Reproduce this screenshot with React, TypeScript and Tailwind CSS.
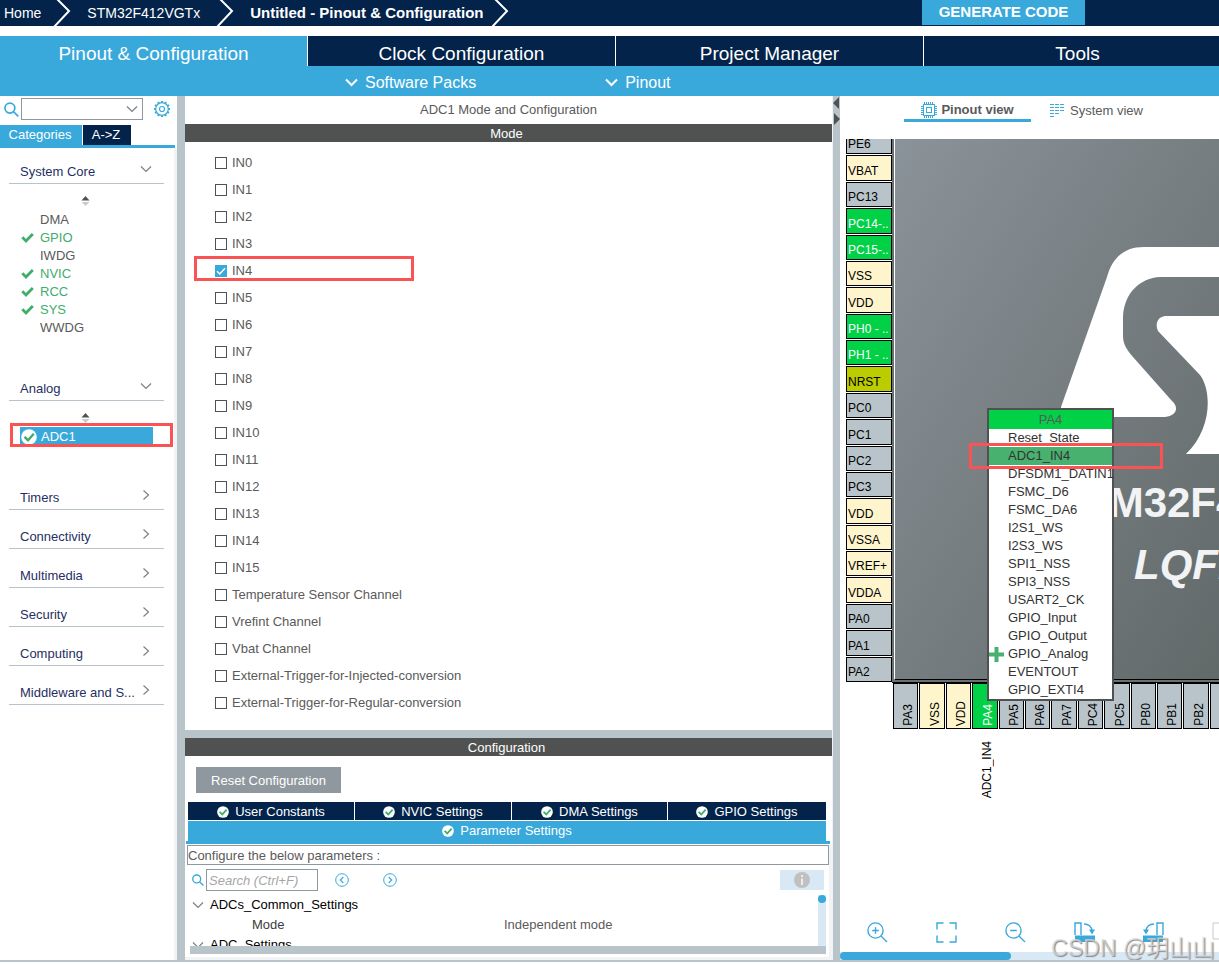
import { useState } from "react";
import type { ReactNode } from "react";
import clsx from "clsx";

const tabs = ["Pinout & Configuration", "Clock Configuration", "Project Manager", "Tools"];

const systemCore = [
  { name: "DMA" },
  { name: "GPIO", enabled: true },
  { name: "IWDG" },
  { name: "NVIC", enabled: true },
  { name: "RCC", enabled: true },
  { name: "SYS", enabled: true },
  { name: "WWDG" },
];

const closedCategories = [
  "Timers",
  "Connectivity",
  "Multimedia",
  "Security",
  "Computing",
  "Middleware and S...",
];

const channels = [
  ...Array.from({ length: 16 }, (_, i) => `IN${i}`),
  "Temperature Sensor Channel",
  "Vrefint Channel",
  "Vbat Channel",
  "External-Trigger-for-Injected-conversion",
  "External-Trigger-for-Regular-conversion",
];

type Kind = "io" | "power" | "used" | "reset";
type Pin = { name: string; kind: Kind };

const pinColors: Record<Kind, string> = {
  io: "bg-[#b8c4ca] text-black",
  power: "bg-[#fff5cc] text-black",
  used: "bg-[#00d147] text-white",
  reset: "bg-[#bbcc00] text-black",
};

const leftPins: Pin[] = [
  { name: "PE6", kind: "io" },
  { name: "VBAT", kind: "power" },
  { name: "PC13", kind: "io" },
  { name: "PC14-..", kind: "used" },
  { name: "PC15-..", kind: "used" },
  { name: "VSS", kind: "power" },
  { name: "VDD", kind: "power" },
  { name: "PH0 - ..", kind: "used" },
  { name: "PH1 - ..", kind: "used" },
  { name: "NRST", kind: "reset" },
  { name: "PC0", kind: "io" },
  { name: "PC1", kind: "io" },
  { name: "PC2", kind: "io" },
  { name: "PC3", kind: "io" },
  { name: "VDD", kind: "power" },
  { name: "VSSA", kind: "power" },
  { name: "VREF+", kind: "power" },
  { name: "VDDA", kind: "power" },
  { name: "PA0", kind: "io" },
  { name: "PA1", kind: "io" },
  { name: "PA2", kind: "io" },
];

const bottomPins: Pin[] = [
  { name: "PA3", kind: "io" },
  { name: "VSS", kind: "power" },
  { name: "VDD", kind: "power" },
  { name: "PA4", kind: "used" },
  { name: "PA5", kind: "io" },
  { name: "PA6", kind: "io" },
  { name: "PA7", kind: "io" },
  { name: "PC4", kind: "io" },
  { name: "PC5", kind: "io" },
  { name: "PB0", kind: "io" },
  { name: "PB1", kind: "io" },
  { name: "PB2", kind: "io" },
  { name: "", kind: "io" },
];

const pinFunctions = [
  "Reset_State",
  "ADC1_IN4",
  "DFSDM1_DATIN1",
  "FSMC_D6",
  "FSMC_DA6",
  "I2S1_WS",
  "I2S3_WS",
  "SPI1_NSS",
  "SPI3_NSS",
  "USART2_CK",
  "GPIO_Input",
  "GPIO_Output",
  "GPIO_Analog",
  "EVENTOUT",
  "GPIO_EXTI4",
];

function Chevron({ dir = "down", className }: { dir?: "down" | "right"; className?: string }) {
  return (
    <svg
      width="12"
      height="12"
      viewBox="0 0 12 12"
      fill="none"
      stroke="currentColor"
      strokeWidth="1.2"
      className={clsx("shrink-0", className)}
    >
      <path d={dir === "down" ? "M1 3.5 6 8.5 11 3.5" : "M3.5 1.5 8.5 6 3.5 10.5"} />
    </svg>
  );
}

function CrumbArrow() {
  return (
    <svg width="18" height="26" viewBox="0 0 18 26" fill="none" stroke="white" strokeWidth="2">
      <path d="M4 -1 16 11 1 27" />
    </svg>
  );
}

function SearchIcon({ size }: { size: number }) {
  return (
    <svg
      width={size}
      height={size}
      viewBox="0 0 14 14"
      fill="none"
      stroke="#39a9dc"
      strokeWidth="1.6"
      className="shrink-0"
    >
      <circle cx="5.5" cy="5.7" r="4.6" />
      <path d="M9 9.2 13.4 13.4" />
    </svg>
  );
}

function Gear() {
  const teeth = Array.from({ length: 12 }, (_, i) => i * 30);
  return (
    <svg width="18" height="18" viewBox="0 0 18 18" fill="none" stroke="#39a9dc">
      <circle cx="9" cy="9" r="6.3" strokeWidth="1.2" />
      <circle cx="9" cy="9" r="2.5" strokeWidth="1.2" />
      {teeth.map((a) => (
        <path key={a} d="M9 2.6V1" strokeWidth="2" transform={`rotate(${a} 9 9)`} />
      ))}
    </svg>
  );
}

function Tick() {
  return (
    <svg width="13" height="12" viewBox="0 0 13 12" fill="none" stroke="#41ad6b" strokeWidth="2.8">
      <path d="M1.3 5.3 5 9 11.8 2" />
    </svg>
  );
}

function TickBadge({ size }: { size: number }) {
  return (
    <svg width={size} height={size} viewBox="0 0 16 16" className="shrink-0">
      <circle cx="8" cy="8" r="7.8" fill="white" />
      <path d="M3.5 7.8 7 11.3 12.8 4.8" fill="none" stroke="#41ad6b" strokeWidth="2.4" />
    </svg>
  );
}

function SortHandle() {
  return (
    <div className="flex h-[26px] items-end justify-center pr-[4px] pb-1">
      <svg width="9" height="10" viewBox="0 0 9 10">
        <path d="M.5 4.5 4.5 0 8.5 4.5Z" fill="#4f5251" />
        <path d="M.5 6 4.5 10 8.5 6Z" fill="#c9cccd" />
      </svg>
    </div>
  );
}

function CategoryHeader({ title, open }: { title: string; open?: boolean }) {
  return (
    <button className="mr-[10px] ml-[9px] flex h-9 items-end justify-between border-b border-[#b8c4ca] pr-3 pb-[2px] pl-[11px] leading-[18px] text-[#1f3063]">
      {title}
      <Chevron dir={open ? "down" : "right"} className="mb-[6px] text-[#7d8184]" />
    </button>
  );
}

function Sidebar() {
  return (
    <aside className="flex min-h-0 flex-col">
      <div className="flex h-[29px] items-center pt-px pb-[4px] pl-1">
        <SearchIcon size={15} />
        <div className="relative ml-[2px] h-[22px] w-[122px]">
          <select
            aria-label="Search peripherals"
            className="h-full w-full appearance-none border border-[#8f989e] bg-white"
          />
          <Chevron className="pointer-events-none absolute top-[5px] right-[5px] text-[#7d8184]" />
        </div>
        <button aria-label="Settings" className="ml-[10px]">
          <Gear />
        </button>
      </div>
      <div className="mr-[2px] flex border-b-[3px] border-[#39a9dc] leading-5 text-white">
        <button className="h-5 w-[82px] bg-[#39a9dc] pr-[2px]">Categories</button>
        <button className="ml-px h-5 w-12 bg-[#03234b] pr-[2px]">A-&gt;Z</button>
      </div>
      <div className="flex min-h-0 flex-1 flex-col border-r-[3px] border-[#f1f3f4]">
        <CategoryHeader title="System Core" open />
        <SortHandle />
        <ul className="mb-[29px]">
          {systemCore.map((item) => (
            <li
              key={item.name}
              className={clsx(
                "flex h-[18px] items-center pt-[2px] pl-[21px]",
                item.enabled ? "text-[#41ad6b]" : "text-[#5a5a5a]",
              )}
            >
              <span className="w-[19px]">{item.enabled && <Tick />}</span>
              {item.name}
            </li>
          ))}
        </ul>
        <CategoryHeader title="Analog" open />
        <SortHandle />
        <div className="relative mb-[29px]">
          <button className="ml-5 flex h-[18px] w-[133px] items-center gap-1 bg-[#39a9dc] pt-px pl-px text-white">
            <TickBadge size={16} />
            ADC1
          </button>
          <div className="pointer-events-none absolute -top-1 right-[1px] left-[10px] h-6 border-3 border-[#fb5353]" />
        </div>
        <div className="flex flex-col gap-[3px]">
          {closedCategories.map((title) => (
            <CategoryHeader key={title} title={title} />
          ))}
        </div>
      </div>
    </aside>
  );
}

function ModeList() {
  const [checked, setChecked] = useState<string[]>(["IN4"]);

  const toggle = (name: string) =>
    setChecked((prev) => (prev.includes(name) ? prev.filter((c) => c !== name) : [...prev, name]));

  return (
    <div className="pt-[7px] pb-[14px]">
      {channels.map((name) => (
        <div key={name} className="relative flex h-[27px] items-center pl-[30px] text-[#5a5a5a]">
          <label className="flex items-center gap-[5px]">
            <span className="relative flex">
              <input
                type="checkbox"
                checked={checked.includes(name)}
                onChange={() => toggle(name)}
                className="h-3 w-3 appearance-none border border-[#4f5251] bg-white checked:border-[#39a9dc] checked:bg-[#39a9dc]"
              />
              {checked.includes(name) && (
                <svg
                  viewBox="0 0 12 12"
                  fill="none"
                  stroke="white"
                  strokeWidth="1.5"
                  className="pointer-events-none absolute inset-0 h-3 w-3"
                >
                  <path d="M2 6.2 4.8 9 10 3.3" />
                </svg>
              )}
            </span>
            {name}
          </label>
          {name === "IN4" && (
            <div className="pointer-events-none absolute -top-px left-[9px] h-[25px] w-[220px] border-3 border-[#fb5353]" />
          )}
        </div>
      ))}
    </div>
  );
}

function SettingsTab({ children }: { children: ReactNode }) {
  return (
    <button className="flex h-[18px] items-center justify-center gap-[6px] bg-[#03234b] pt-px text-white">
      <TickBadge size={12} />
      {children}
    </button>
  );
}

function RoundArrow({ path }: { path: string }) {
  return (
    <svg width="14" height="14" viewBox="0 0 14 14" fill="none" stroke="#39a9dc">
      <circle cx="7" cy="7" r="6.3" />
      <path d={path} strokeWidth="1.2" />
    </svg>
  );
}

function ConfigurationPanel() {
  return (
    <section className="flex min-h-0 flex-1 flex-col">
      <h2 className="h-[18px] bg-[#4f5251] pr-1 text-center leading-5 text-white">Configuration</h2>
      <button className="mt-[11px] ml-[11px] h-[26px] w-[145px] shrink-0 bg-[#8f989e] pt-px text-white">
        Reset Configuration
      </button>
      <div className="mt-[9px] mr-[6px] ml-[3px] grid shrink-0 grid-cols-[166fr_156fr_155fr_158fr] gap-px">
        <SettingsTab>User Constants</SettingsTab>
        <SettingsTab>NVIC Settings</SettingsTab>
        <SettingsTab>DMA Settings</SettingsTab>
        <SettingsTab>GPIO Settings</SettingsTab>
      </div>
      <button className="mt-px mr-[6px] ml-[3px] flex h-5 shrink-0 items-center justify-center gap-[6px] bg-[#39a9dc] text-white">
        <TickBadge size={12} />
        Parameter Settings
      </button>
      <div className="mr-[2px] ml-px h-[3px] shrink-0 bg-[#39a9dc]" />
      <div className="flex min-h-0 flex-1 flex-col border-r-[3px] border-b-[3px] border-[#f1f3f4] pt-px pb-[3px] pl-[2px]">
        <p className="h-5 shrink-0 border border-[#8f989e] leading-5 text-[#5a5a5a]">
          Configure the below parameters :
        </p>
        <div className="flex h-[29px] shrink-0 items-center pr-[5px] pl-[5px]">
          <SearchIcon size={12} />
          <input
            type="text"
            aria-label="Search parameters"
            placeholder="Search (Ctrl+F)"
            className="ml-[2px] h-[22px] w-28 border border-[#8f989e] px-[2px] pt-px italic placeholder:text-[#a6a6a6]"
          />
          <button aria-label="Previous" className="ml-[17px]">
            <RoundArrow path="M8.3 4 5.3 7 8.3 10" />
          </button>
          <button aria-label="Next" className="ml-[34px]">
            <RoundArrow path="M5.7 4 8.7 7 5.7 10" />
          </button>
          <button
            aria-label="Information"
            className="ml-auto flex h-5 w-11 items-center justify-center bg-[#d8e8f5]"
          >
            <svg width="16" height="16" viewBox="0 0 16 16">
              <circle cx="8" cy="8" r="8" fill="#c0c0c0" />
              <path d="M8 3V5M8 6.5V13" stroke="#e8eef3" strokeWidth="2" />
            </svg>
          </button>
        </div>
        <div className="mr-[3px] ml-[3px] flex min-h-0 flex-1">
          <div className="min-w-0 flex-1 overflow-hidden pt-px leading-5 text-black">
            <div className="flex items-center gap-[6px] pl-[2px]">
              <Chevron className="text-[#7d8184]" />
              ADCs_Common_Settings
            </div>
            <div className="grid grid-cols-2 text-[#3c3c3c]">
              <span className="pl-[62px]">Mode</span>
              <span className="text-[#5a5a5a]">Independent mode</span>
            </div>
            <div className="flex items-center gap-[6px] pl-[2px]">
              <Chevron className="text-[#7d8184]" />
              ADC_Settings
            </div>
          </div>
          <div className="mt-px w-2 bg-[#d8e8f5]">
            <div className="h-2 w-2 rounded-full bg-[#39a9dc]" />
          </div>
        </div>
        <div className="mr-[3px] ml-[3px] h-2 shrink-0 bg-[#b8c4ca]" />
      </div>
    </section>
  );
}

function PinMenu() {
  return (
    <div className="absolute top-[269px] left-[147px] w-[127px] border-2 border-[#4f5251] bg-white">
      <div className="h-[19px] bg-[#00d147] text-center leading-5 text-[#5a5a5a]">PA4</div>
      <ul className="text-[#333333]">
        {pinFunctions.map((fn) => (
          <li key={fn} className="relative">
            <button
              className={clsx(
                "block h-[18px] w-full pl-[19px] text-left leading-[18px] whitespace-nowrap",
                fn === "ADC1_IN4" && "bg-[#49b170]",
              )}
            >
              {fn}
            </button>
            {fn === "ADC1_IN4" && (
              <div className="pointer-events-none absolute -top-1 left-[-20px] z-10 h-[26px] w-[194px] border-3 border-[#fb5353]" />
            )}
            {fn === "GPIO_Analog" && (
              <svg
                width="15"
                height="15"
                viewBox="0 0 15 15"
                stroke="#49b170"
                strokeWidth="4"
                className="absolute top-[2px] left-0"
              >
                <path d="M7.5 0V15M0 7.5H15" />
              </svg>
            )}
          </li>
        ))}
      </ul>
    </div>
  );
}

function ChipCanvas() {
  return (
    <div className="relative mt-[17px] pl-[6px] text-xs">
      <div className="flex h-[544px]">
        <div className="flex w-[46px] shrink-0 flex-col justify-end overflow-hidden">
          <div className="flex h-[554px] shrink-0 flex-col">
            {leftPins.map((pin, i) => (
              <div
                key={i}
                className={clsx(
                  "mb-px flex flex-1 items-end border border-black pl-px leading-[18px] whitespace-nowrap",
                  pinColors[pin.kind],
                )}
              >
                {pin.name}
              </div>
            ))}
          </div>
        </div>
        <div className="min-w-0 flex-1 border-b border-black bg-[#6a7173] pb-[2px] pl-[2px]">
          <div className="relative h-full overflow-hidden border-b border-l border-b-black border-l-white bg-linear-to-br from-[#8b939a] to-[#626969]">
            <svg className="absolute inset-0 h-full w-full" fill="white">
              <path d="M330 108H249C228 108 217 120 212 138L166 268V278H270C282 277 284 268 277 262L238 218C230 209 228 203 228 197V178C229 154 245 139 265 138H330Z" />
              <path d="M330 177H270C262 178 260 186 263 192L305 236C317 252 317 290 291 315H330Z" />
              <g fill="#f1f3f4" fontFamily="Liberation Sans" fontSize="42" fontWeight="700">
                <text x="160" y="378">
                  STM32F412VGTx
                </text>
                <text x="239" y="440" fontStyle="italic">
                  LQFP100
                </text>
              </g>
            </svg>
          </div>
        </div>
      </div>
      <div className="flex h-[46px] overflow-hidden pl-[47px]">
        <div className="flex w-[343px] shrink-0">
          {bottomPins.map((pin, i) => (
            <div
              key={i}
              className={clsx(
                "mr-px flex flex-1 items-end justify-end border border-black pb-[2px]",
                pinColors[pin.kind],
              )}
            >
              <span className="rotate-180 leading-[18px] [writing-mode:vertical-rl]">
                {pin.name}
              </span>
            </div>
          ))}
        </div>
      </div>
      <div className="absolute top-[602px] left-[138px] rotate-180 leading-[18px] text-black [writing-mode:vertical-rl]">
        ADC1_IN4
      </div>
      <div className="text-[13px]">
        <PinMenu />
      </div>
    </div>
  );
}

function ToolbarIcon({ label, children }: { label: string; children: ReactNode }) {
  return (
    <button aria-label={label} className="shrink-0">
      <svg width="21" height="21" viewBox="0 0 21 21" fill="none" stroke="#39a9dc" strokeWidth="1.4">
        {children}
      </svg>
    </button>
  );
}

function PinoutPanel() {
  return (
    <main className="relative flex min-h-0 min-w-0 flex-col overflow-hidden">
      <div className="flex h-[26px] gap-[19px] pl-16 text-[#5a5a5a]">
        <button className="flex w-[127px] items-center justify-center gap-1 border-b-[3px] border-[#39a9dc] pt-[5px] font-bold">
          <svg width="16" height="16" viewBox="0 0 16 16" fill="none" stroke="#39a9dc">
            <rect x="2.5" y="2.5" width="11" height="11" />
            <rect x="5.5" y="5.5" width="5" height="5" />
            <path d="M3.5 0V2M5.5 0V2M7.5 0V2M9.5 0V2M11.5 0V2M3.5 14V16M5.5 14V16M7.5 14V16M9.5 14V16M11.5 14V16" />
            <path d="M0 4.5H2M0 6.5H2M0 8.5H2M0 10.5H2M0 12.5H2M14 4.5H16M14 6.5H16M14 8.5H16M14 10.5H16M14 12.5H16" />
          </svg>
          Pinout view
        </button>
        <button className="flex items-center gap-[5px] pt-[3px]">
          <svg width="15" height="14" viewBox="0 0 15 14" stroke="#39a9dc" strokeDasharray="4 1">
            <path d="M0 .5H15M0 3.5H15M0 6.5H15" />
            <path d="M0 9.5H9" />
            <path d="M0 12.5H4" />
          </svg>
          System view
        </button>
      </div>
      <ChipCanvas />
      <div className="mt-auto flex h-[30px] items-start gap-12 overflow-hidden pl-[27px]">
        <ToolbarIcon label="Zoom in">
          <circle cx="8.5" cy="8.5" r="7.6" />
          <path d="M14 14 20 20M8.5 5.2V11.8M5.2 8.5H11.8" />
        </ToolbarIcon>
        <ToolbarIcon label="Best fit">
          <path d="M1 7.5V1H7.5M13.5 1H20V7.5M20 13.5V20H13.5M7.5 20H1V13.5" />
        </ToolbarIcon>
        <ToolbarIcon label="Zoom out">
          <circle cx="8.5" cy="8.5" r="7.6" />
          <path d="M14 14 20 20M5.2 8.5H11.8" />
        </ToolbarIcon>
        <ToolbarIcon label="Rotate right">
          <path d="M1 13V1H7V13M10 2C15 2 17.5 5 18 9" />
          <path d="M15 7.5H21L18 12.5ZM1 13.5H21V20H1Z" fill="#39a9dc" stroke="none" />
        </ToolbarIcon>
        <ToolbarIcon label="Rotate left">
          <path d="M20 13V1H14V13M11 2C6 2 3.5 5 3 9" />
          <path d="M0 7.5H6L3 12.5ZM0 13.5H20V20H0Z" fill="#39a9dc" stroke="none" />
        </ToolbarIcon>
        <svg width="21" height="21" viewBox="0 0 21 21" fill="none" stroke="#c9c9c9" className="shrink-0">
          <path d="M1 1H10V17H1Z" />
        </svg>
      </div>
      <div className="h-2 shrink-0 bg-[#d8e8f5]">
        <div className="h-2 w-[45%] rounded-full bg-[#39a9dc]" />
      </div>
      <div className="pointer-events-none absolute right-1 bottom-0 font-['Liberation_Sans','Noto_Sans_CJK_SC',sans-serif] text-[23px] leading-6 whitespace-nowrap text-[#dddddd]/70 [text-shadow:1px_1px_1px_#888]">
        CSDN @玥山山
      </div>
    </main>
  );
}

export default function App() {
  const [active, setActive] = useState(tabs[0]);

  return (
    <div className="flex h-screen flex-col overflow-hidden bg-white pb-1 font-['Liberation_Sans',Arial,sans-serif] text-[13px]">
      <header className="flex h-[26px] shrink-0 bg-[#03234b] text-white">
        <nav className="flex items-center pl-1 text-sm">
          <a href="#home" className="mr-3">
            Home
          </a>
          <CrumbArrow />
          <a href="#device" className="mx-4">
            STM32F412VGTx
          </a>
          <CrumbArrow />
          <a href="#project" className="mr-2 ml-4 text-[15px] font-bold">
            Untitled - Pinout &amp; Configuration
          </a>
          <CrumbArrow />
        </nav>
        <button className="mr-[134px] ml-auto h-[25px] w-[163px] bg-[#39a9dc] text-[15px] font-bold">
          GENERATE CODE
        </button>
      </header>

      <nav className="mt-[10px] grid h-[30px] w-[calc(100%+12px)] shrink-0 grid-cols-4 gap-px text-[19px] text-white">
        {tabs.map((tab) => (
          <button
            key={tab}
            onClick={() => setActive(tab)}
            className={clsx("pt-1", active === tab ? "bg-[#39a9dc]" : "bg-[#03234b]")}
          >
            {tab}
          </button>
        ))}
      </nav>
      <div className="flex h-[30px] shrink-0 gap-[129px] bg-[#39a9dc] pt-[3px] pl-[345px] text-base text-white">
        {["Software Packs", "Pinout"].map((menu) => (
          <button key={menu} className="flex items-center gap-[7px]">
            <svg width="13" height="9" viewBox="0 0 13 9" fill="none" stroke="white" strokeWidth="2">
              <path d="M1 1.5 6.5 7 12 1.5" />
            </svg>
            {menu}
          </button>
        ))}
      </div>

      <div className="grid min-h-0 flex-1 grid-cols-[177px_8px_minmax(0,648fr)_7px_minmax(0,379fr)] grid-rows-[minmax(0,1fr)] border-b-2 border-[#b8c4ca]">
        <Sidebar />
        <div className="bg-[#b8c4ca]" />
        <div className="flex min-h-0 flex-col border-r border-[#f1f3f4]">
          <h1 className="h-7 shrink-0 text-center leading-7 text-[#5a5a5a]">
            ADC1 Mode and Configuration
          </h1>
          <h2 className="h-[18px] shrink-0 bg-[#4f5251] pr-1 text-center leading-5 text-white">
            Mode
          </h2>
          <ModeList />
          <div className="h-2 shrink-0 bg-[#b8c4ca]" />
          <ConfigurationPanel />
        </div>
        <div className="bg-[#b8c4ca]">
          <svg width="7" height="32" viewBox="0 0 7 32" fill="#4f5251">
            <path d="M6 1V13L0 7ZM1 17V29L7 23Z" />
          </svg>
        </div>
        <PinoutPanel />
      </div>
    </div>
  );
}
